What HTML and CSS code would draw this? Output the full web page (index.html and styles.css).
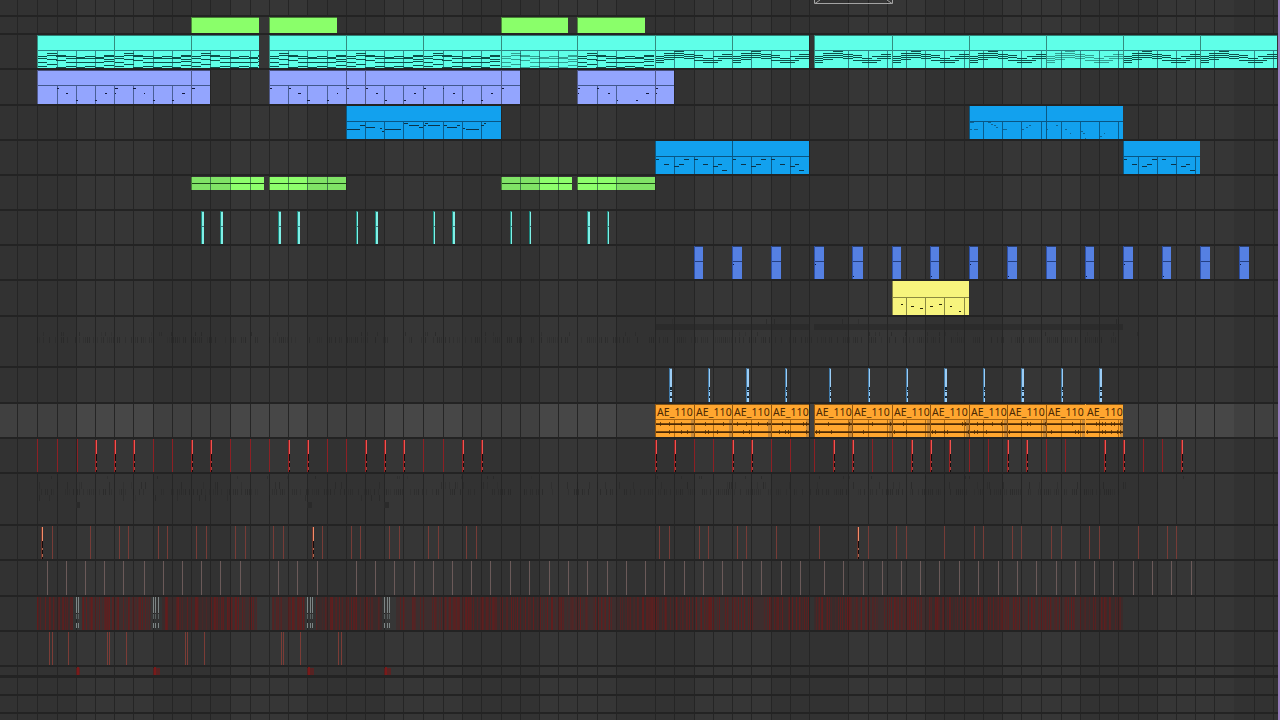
FILE: index.html
```html
<!DOCTYPE html>
<html lang="en">
<head>
	<meta charset="UTF-8">
	<title>Arrangement</title>
	<link rel="stylesheet" href="styles.css">
</head>
<body>
	<div id="arrangement"></div>
	<div class="loop">
		<svg width="79" height="4"><path d="M.5 0V3.5H78.5V0M1 3.5L6 0M78 3.5L73 0"/></svg>
	</div>
	<div class="end"></div>
	<script src="arrangement.js"></script>
</body>
</html>
```
FILE: styles.css
```css
body {
	margin: 0;
	width: 1280px;
	height: 720px;
	overflow: hidden;
	position: relative;
	background: #323232;
	font-family: "Noto Sans", "Open Sans", sans-serif;
}
svg {
	display: block;
}
#arrangement {
	display: flex;
	flex-direction: column;
	height: 720px;
}
.track {
	flex: none;
	display: grid;
	box-sizing: border-box;
	border-bottom: 2px solid #232323;
	overflow: hidden;
}
.track > * {
	grid-area: 1 / 1;
}
.track.group {
	border-bottom-width: 3px;
}
.grid .bar {
	fill: #252525;
}
.grid .light {
	fill: #363636;
}
.track.selected {
	background: #404040;
}
.selected .grid .light {
	fill: #474747;
}
.lane {
	display: flex;
	align-items: flex-start;
}
.clip {
	flex: none;
	display: flex;
	flex-direction: column;
	box-sizing: border-box;
	overflow: hidden;
	color: #0c3348;
	border-left: 1px solid rgba(0, 0, 0, 0.45);
	box-shadow: inset 0 1px rgba(0, 0, 0, 0.5);
}
.clip .name {
	flex: none;
	box-sizing: border-box;
	height: 16px;
	border-bottom: 1px solid rgba(0, 25, 45, 0.55);
	font-size: 10.5px;
	line-height: 16px;
	letter-spacing: 0.1px;
	white-space: nowrap;
}
.clip svg {
	flex: none;
}
.clip .note {
	fill: currentColor;
}
.clip .faint {
	fill: currentColor;
	opacity: 0.55;
}
.clip .bar {
	fill: rgba(0, 25, 45, 0.5);
}
.lime {
	background: #8aff6a;
}
.lime .name, .stem .name {
	display: none;
}
.aqua {
	background: #5fffe8;
	color: #0c5049;
}
.lilac {
	background: #93a5fe;
	color: #12183c;
}
.blue {
	background: #12a1ee;
	box-shadow: none;
}
.stem {
	background: #80e366;
	margin-top: 1px;
	box-shadow: none;
}
.stem .bright {
	fill: #8eff6c;
}
.stem .note {
	fill: #1d4a18;
}
.chop {
	background: #80f0e6;
	border-left-color: #1b877e;
	color: #1b877e;
}
.stab {
	background: #5580e2;
	color: #0d1940;
	border-left-color: #2c4fa6;
}
.stab .name {
	border-color: #233f83;
}
.lemon {
	background: #f7f47d;
	color: #27260a;
	box-shadow: none;
}
.lemon .name {
	border-color: #8c8a40;
}
.lemon .bar {
	fill: #8c8a40;
}
.sky {
	background: #9ccdf5;
	color: #12283a;
	border-left-color: #417aa8;
}
.sky .name {
	border-color: #9ccdf5;
}
.sample {
	background: #ffa62f;
	color: #4a2804;
	border-left-color: #8d5410;
}
.sample .name {
	padding-left: 1px;
	border-color: #a8640f;
}
.sample:last-child {
	border-left-color: #ffa62f;
}
.sample .bar {
	fill: #b06c14;
}
.sample .fade {
	fill: #c98a3a;
}
.sample .faint {
	opacity: 0.75;
}
.loop {
	position: absolute;
	left: 814px;
	top: 0;
}
.loop path {
	fill: none;
	stroke: #a3a3a3;
}
.end {
	position: absolute;
	left: 1278px;
	top: 0;
	width: 2px;
	height: 720px;
	background: #9a7ec0;
}
```
FILE: arrangement.js
```js
var GRID=[17,37,57,76,95,114,133,153,172,191,210,230,250,269,288,307,327,346,365,384,403,423,443,462,481,501,520,539,558,577,597,616,655,674,694,713,732,751,771,790,809,848,868,887,906,925,944,964,983,1002,1021,1041,1061,1080,1099,1118,1138,1157,1176,1195,1214,1254,1273];
var LIGHT=[[76,153],[230,307],[384,462],[539,617],[694,771],[848,925],[1002,1080],[1157,1234]];
var root=document.getElementById('arrangement');
var top0=0;
var seed=7;
function rnd() {
	seed=(seed*16807)%2147483647;
	return seed/2147483647;
}
function rect(x,y,w,h,cls) {
	return '<rect class="'+cls+'" x="'+x+'" y="'+y+'" width="'+w+'" height="'+h+'"/>';
}
function fill(x,y,w,h,color,op) {
	return '<rect x="'+x+'" y="'+y+'" width="'+w+'" height="'+h+'" fill="'+color+'" opacity="'+(op||1)+'"/>';
}
function svg(x,y,w,h,inner,cls) {
	return '<svg class="'+(cls||'')+'" width="'+w+'" height="'+h+'" viewBox="'+x+' '+y+' '+w+' '+h+'">'+inner+'</svg>';
}
function bars(x0,x1,y,h) {
	return GRID.filter(g=>g>x0&&g<x1).map(g=>rect(g,y,1,h,'bar')).join('');
}
// one track row: bottom edge, lane content and extra class
function track(bottom,content,cls) {
	var h=bottom-top0;
	var g=LIGHT.map(l=>rect(l[0],top0,l[1]-l[0],h,'light')).join('')+bars(0,1280,top0,h);
	root.insertAdjacentHTML('beforeend','<div class="track '+(cls||'')+'" style="height:'+h+'px">'+svg(0,top0,1280,h,g,'grid')+(content||'')+'</div>');
	top0=bottom;
}
// clips: [start,end] pairs, drawn left to right; draw() fills the clip body
function clips(kind,list,h,head,draw,name) {
	var pos=0;
	return '<div class="lane">'+list.map(function (c) {
		var w=c[1]-c[0];
		var by=top0+head;
		var s='<div class="clip '+kind+'" style="margin-left:'+(c[0]-pos)+'px;width:'+w+'px;height:'+h+'px"><div class="name" style="height:'+head+'px">'+(name||'')+'</div>'+(draw?svg(c[0]+1,by,w,h-head,draw(c[0],c[1],by,h-head)):'')+'</div>';
		pos=c[1];
		return s;
	}).join('')+'</div>';
}
function split(points) {
	return points.slice(1).map((p,i)=>[points[i],p]);
}
function notes(list,w) {
	return (x0,x1,y,h)=>bars(x0,x1,y,h)+list.filter(n=>n[0]>=x0&&n[0]<x1).map(n=>rect(n[0],n[1],n[2]||w,1,x0>=969&&n[1]<150?'faint':'note')).join('');
}
var CHORD=[[0,10,56,58,62,66],[10,10,53,55,59,64],[19,10,55,56,60,67],[29,10,56,58,62,66],[39,9,57,58,62,67],[48,10,56,58,62,66],[58,9,57,58,62,67],[67,10,55,56,59,61,65]];
var CLIMB=[[0,9,56,58,60,62],[9,10,53,55,57,59],[19,10,51,53,55,57],[29,10,54,56,58],[39,9,55,57,60],[48,10,58,60,62],[58,5,56,60,62],[63,4,56,58,60],[67,10,54,56,58]];
function chords(x0,x1,y,h) {
	var set=x0<655?CHORD:CLIMB;
	var cls=x0==501||x0==1046?'faint':'note';
	return bars(x0,x1,y,h)+set.map(c=>c.slice(2).map(n=>rect(x0+c[0],n,c[1],1,cls)).join('')).join('');
}
// thin hits
function lines(list,h,color,op) {
	return list.map(x=>fill(x,top0,1,h,color,op)).join('');
}
function strong(list,h,edge,core) {
	return list.map(x=>fill(x-1,top0+1,1,h-1,edge,.75)+fill(x,top0+1,1,14,core)+fill(x,top0+15,1,h-15,'#170b0b')+fill(x,top0+22,1,2,core,.7)+fill(x,top0+28,1,3,core,.7)).join('');
}
function lane(inner,h) {
	return svg(0,top0,1280,h,inner);
}
function ghost(y,h,x0,x1,chance) {
	var s='';
	for (var x=x0;x<x1;x+=2) {
		if (rnd()<chance) {
			s+=fill(x,y,1,h,'#202020',(.15+rnd()*.35).toFixed(2));
		}
	}
	return s;
}

track(17);
track(35,clips('lime',[[191,259],[269,337],[501,568],[577,645]],16,0));
track(70,clips('aqua',split([37,114,191,259]).concat(split([269,346,423,501,577,655,732,809]),split([814,892,969,1046,1123,1200,1277])),33,16,chords));
var LILAC=[[57,88],[66,93],[76,100],[95,100],[105,93],[115,88,3],[115,93,1],[133,88,3],[144,93,1],[153,100],[172,100],[182,93,3],[192,88,3],[270,88],[289,88],[298,93,3],[307,100,3],[327,100],[337,93,1],[347,88],[366,88],[376,93],[385,100],[404,100],[414,93],[424,88],[443,88,1],[453,93,2],[462,100],[481,100],[491,93],[502,88],[578,88],[578,93,1],[597,88],[608,93],[617,100,1],[636,100],[646,93,3],[656,88],[656,93,1]];
track(106,clips('lilac',[[37,191],[191,210],[269,346],[346,365],[365,501],[501,520],[577,655],[655,674]],34,16,notes(LILAC,2)));
var LEAD=[[347,129,13],[360,125,5],[366,127,9],[380,128,2],[382,131,2],[385,129,16],[404,123,4],[409,125,10],[419,127,4],[424,125,2],[425,123,3],[428,125,12],[444,125,3],[447,127,10],[457,125,3],[463,128,2],[466,129,13],[481,125,3],[484,123,2],[970,122,4],[970,129,2],[974,129,4],[988,122,3],[991,124,2],[994,125,2],[996,127,2],[1003,129,4],[1022,129,2],[1026,127,2],[1029,125,2],[1047,129,1],[1056,125,2],[1065,129,2],[1070,133,1],[1081,131,2],[1083,133,2],[1085,138,1],[1100,136,2],[1104,133,1]];
track(141,clips('blue',[[346,501],[969,1046],[1046,1123]],33,16,notes(LEAD,2)));
var RIFF=[[1,159,3],[9,164,5],[19,166,5],[24,164,5],[29,159,5],[39,159,4],[48,164,5],[58,166,5],[63,164,4],[67,170,5]];
var riffs=[655,732,1123].flatMap(x=>RIFF.map(n=>[n[0]+x,n[1],n[2]]));
track(176,clips('blue',[[655,732],[732,809],[1123,1200]],33,16,notes(riffs,3)));
track(211,clips('stem',[[191,264],[269,346],[501,572],[577,655]],13,0,function (x0,x1,y,h) {
	return LIGHT.map(l=>rect(l[0],y,l[1]-l[0],h,'bright')).join('')+bars(x0,x1,y,h)+rect(x0,y+6,x1-x0,1,'note');
}));
track(246,clips('chop',[[201,204],[220,223],[278,281],[297,300],[356,358],[375,378],[433,435],[452,455],[510,512],[529,531],[587,590],[607,609]],33,16));
var STAB=[[733,264],[815,264],[853,276],[931,276],[970,264],[1008,276],[1086,276],[1124,264],[1163,276],[1240,264]];
track(281,clips('stab',[[694,703],[732,742],[771,781],[814,824],[852,863],[892,901],[930,939],[969,978],[1007,1017],[1046,1056],[1085,1094],[1123,1133],[1162,1171],[1200,1210],[1239,1249]],33,16,notes(STAB,1)));
track(317,clips('lemon',[[892,969]],34,17,notes([[901,304,2],[911,306,3],[920,308,3],[930,306,3],[939,304,3],[950,306,2],[959,311,2]],2)));
track(368,lane(fill(655,324,154,6,'#262626',.55)+fill(814,324,309,6,'#262626',.55)+ghost(337,6,37,259,.6)+ghost(337,6,269,1123,.6)+ghost(332,4,37,1190,.05)+ghost(319,5,660,1120,.04),49));
track(404,clips('sky',[[669,672],[708,710],[746,749],[785,787],[829,831],[868,870],[906,908],[944,947],[983,985],[1021,1024],[1061,1063],[1099,1102]],34,16,function (x0,x1,y) {
	return rect(x0,y+3,3,3,'note')+rect(x0,y+7,3,1,'note')+rect(x0,y+12,3,2,'note');
}));
track(439,clips('sample',split([655,694,732,771,809]).concat(split([814,852,892,930,969,1007,1046,1085,1123])),33,16,function (x0,x1,y,h) {
	var s=rect(x1-3,y,3,h,'fade')+bars(x0,x1,y,h);
	[424,432].forEach(function (w) {
		s+=rect(x0+1,w,x1-x0,1,'note')+rect(x0+1,w-1,x1-x0,1,'faint');
		for (var x=x0+2;x<x1;x+=3) {
			if (rnd()<.25) s+=rect(x,w-2,1,4,'faint');
		}
	});
	return s;
},'AE_110'),'selected');
track(474,lane(lines([37,57,77,153,172,230,250,269,327,346,423,443,694,713,771,790,814,872,892,969,988,1046,1065,1143,1162],33,'#8c2024')+strong([96,115,134,192,211,289,308,366,385,404,463,482,656,675,733,752,834,853,912,931,950,1008,1027,1105,1124,1182],33,'#bc1c1f','#ef5450'),33));
track(526,lane(ghost(489,6,37,259,.55)+ghost(489,6,272,1123,.55)+ghost(482,7,37,1190,.1)+ghost(495,6,37,380,.08)+ghost(476,3,37,1190,.04)+fill(76,502,4,6,'#2a2a2a')+fill(307,502,5,6,'#2a2a2a')+fill(384,502,5,6,'#2a2a2a'),50));
track(561,lane(lines([52,90,119,128,158,167,196,206,235,245,273,283,322,351,360,389,399,428,438,466,476,659,669,699,708,737,746,776,819,868,896,906,944,974,983,1012,1021,1051,1061,1089,1099,1138,1167,1176],33,'#763c37')+strong([42,313,858],33,'#7c3327','#f58d69'),33));
track(597,lane(lines([47,66,85,104,123,144,163,182,201,220,240,278,297,317,356,375,394,414,433,452,471,490,510,529,549,568,587,607,626,645,664,684,703,722,742,761,781,800,824,843,863,882,901,920,939,959,978,998,1017,1036,1056,1075,1094,1113,1133,1152,1171,1191],34,'#6b5a59'),34));
var hats='';
[[37,73],[82,151],[162,257],[272,305],[316,382],[396,809],[814,1123]].forEach(function (r) {
	hats+=fill(r[0],597,r[1]-r[0],33,'#4a2020',.35);
	for (var x=r[0];x<r[1];x++) {
		if (rnd()<.5) hats+=fill(x,597,1,33,'#6a1a1a',(.2+rnd()*.65).toFixed(2));
	}
});
[76,78,153,155,158,307,310,312,384,387,389].forEach(function (x) {
	hats+=fill(x,597,1,16,'#7d8585')+fill(x,614,1,5,'#596060')+fill(x,623,1,5,'#7d8585');
});
track(632,lane(hats,33));
track(667,lane(lines([49,52,68,107,109,126,185,187,204,281,283,300,338,341],33,'#7b3c36'),33));
track(678,lane([[76,4],[153,7],[307,7],[384,7]].map(b=>fill(b[0],668,b[1],7,'#6c1c1c',.65)+fill(b[0]+1,667,2,8,'#7a1a1a')).join(''),8),'group');
track(696);
track(714);
track(722);
```
